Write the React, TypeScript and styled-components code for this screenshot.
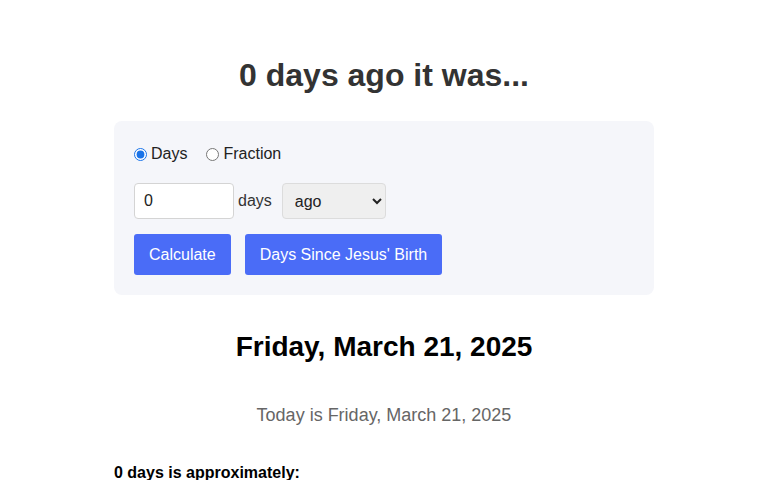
import React, { useState } from "react";
import styled, { createGlobalStyle } from "styled-components";

const GlobalStyle = createGlobalStyle`
  html, body {
    margin: 0;
    padding: 0;
    background: #ffffff;
    font-family: "Liberation Sans", Arial, sans-serif;
  }
`;

export const App = () => {
  const [mode, setMode] = useState("days");
  const [amount, setAmount] = useState("0");
  const [direction, setDirection] = useState("ago");

  return (
    <Page>
      <GlobalStyle />
      <Container>
        <Title>0 days ago it was...</Title>
        <Panel>
          <RadioRow>
            <RadioLabel>
              <Radio
                type="radio"
                name="mode"
                checked={mode === "days"}
                onChange={() => setMode("days")}
              />
              Days
            </RadioLabel>
            <RadioLabel>
              <Radio
                type="radio"
                name="mode"
                checked={mode === "fraction"}
                onChange={() => setMode("fraction")}
              />
              Fraction
            </RadioLabel>
          </RadioRow>
          <InputRow>
            <NumberInput
              type="text"
              value={amount}
              onChange={(e) => setAmount(e.target.value)}
            />
            <Unit>days</Unit>
            <Select
              value={direction}
              onChange={(e) => setDirection(e.target.value)}
            >
              <option value="ago">ago</option>
              <option value="from now">from now</option>
            </Select>
          </InputRow>
          <ButtonRow>
            <Button>Calculate</Button>
            <Button>Days Since Jesus' Birth</Button>
          </ButtonRow>
        </Panel>
        <ResultDate>Friday, March 21, 2025</ResultDate>
        <Today>Today is Friday, March 21, 2025</Today>
        <Approx>0 days is approximately:</Approx>
      </Container>
    </Page>
  );
};

export default App;

const Page = styled.div`
  width: 100%;
  padding-top: 40px;
`;

const Container = styled.div`
  width: 540px;
  margin: 0 auto;
`;

const Title = styled.h1`
  margin: 0 0 11px;
  font-size: 32px;
  line-height: 70px;
  font-weight: bold;
  color: #333333;
  text-align: center;
`;

const Panel = styled.div`
  background: #f5f6fa;
  border-radius: 8px;
  padding: 21px 20px 20px;
  display: flex;
  flex-direction: column;
`;

const RadioRow = styled.div`
  display: flex;
  align-items: center;
  height: 24px;
`;

const RadioLabel = styled.label`
  display: flex;
  align-items: center;
  font-size: 16px;
  color: #222222;
  margin-right: 19px;
  cursor: pointer;
`;

const Radio = styled.input`
  margin: 0 4px 0 0;
  width: 13px;
  height: 13px;
  accent-color: #1a73e8;
`;

const InputRow = styled.div`
  display: flex;
  align-items: center;
  margin-top: 17px;
`;

const NumberInput = styled.input`
  box-sizing: border-box;
  width: 100px;
  height: 36px;
  padding: 0 9px;
  border: 1px solid #d4d4d4;
  border-radius: 4px;
  background: #ffffff;
  font-family: "Liberation Sans", Arial, sans-serif;
  font-size: 16px;
  color: #222222;
`;

const Unit = styled.span`
  font-size: 16px;
  color: #333333;
  margin: 0 10px 0 4px;
`;

const Select = styled.select`
  box-sizing: border-box;
  width: 104px;
  height: 36px;
  padding: 0 8px;
  border: 1px solid #dcdcdc;
  border-radius: 4px;
  background: #efefef;
  font-family: "Liberation Sans", Arial, sans-serif;
  font-size: 16px;
  color: #222222;
`;

const ButtonRow = styled.div`
  display: flex;
  gap: 14px;
  margin-top: 15px;
`;

const Button = styled.button`
  height: 41px;
  padding: 0 15px;
  border: none;
  border-radius: 3px;
  background: #4a6cf7;
  color: #ffffff;
  font-family: "Liberation Sans", Arial, sans-serif;
  font-size: 16px;
  cursor: pointer;
`;

const ResultDate = styled.h2`
  margin: 34px 0 0;
  font-size: 28px;
  line-height: 36px;
  font-weight: bold;
  color: #000000;
  text-align: center;
`;

const Today = styled.p`
  margin: 39px 0 0;
  font-size: 18px;
  line-height: 22px;
  color: #666666;
  text-align: center;
`;

const Approx = styled.p`
  margin: 37px 0 0;
  font-size: 16px;
  line-height: 20px;
  font-weight: bold;
  color: #000000;
`;
